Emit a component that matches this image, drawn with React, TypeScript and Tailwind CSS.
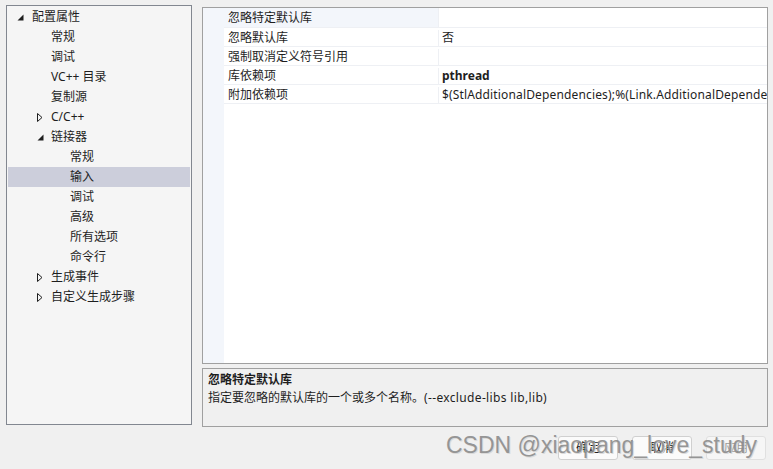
const font = "font-['Microsoft_YaHei_UI','Noto_Sans','Noto_Sans_CJK_SC',sans-serif]";

type TreeItem = { label: string; level: number; arrow?: "open" | "closed"; selected?: boolean };

const tree: TreeItem[] = [
  { label: "配置属性", level: 0, arrow: "open" },
  { label: "常规", level: 1 },
  { label: "调试", level: 1 },
  { label: "VC++ 目录", level: 1 },
  { label: "复制源", level: 1 },
  { label: "C/C++", level: 1, arrow: "closed" },
  { label: "链接器", level: 1, arrow: "open" },
  { label: "常规", level: 2 },
  { label: "输入", level: 2, selected: true },
  { label: "调试", level: 2 },
  { label: "高级", level: 2 },
  { label: "所有选项", level: 2 },
  { label: "命令行", level: 2 },
  { label: "生成事件", level: 1, arrow: "closed" },
  { label: "自定义生成步骤", level: 1, arrow: "closed" },
];

const rows = [
  { name: "忽略特定默认库", value: "", active: true },
  { name: "忽略默认库", value: "否" },
  { name: "强制取消定义符号引用", value: "" },
  { name: "库依赖项", value: "pthread", bold: true },
  { name: "附加依赖项", value: "$(StlAdditionalDependencies);%(Link.AdditionalDependencies)", wide: true },
];

function Arrow({ kind }: { kind: "open" | "closed" }) {
  if (kind === "open") {
    return (
      <svg width="7" height="7" viewBox="0 0 7 7">
        <path d="M6.5 0.5 L6.5 6.5 L0.5 6.5 Z" fill="#1e1e1e" />
      </svg>
    );
  }
  return (
    <svg width="6" height="9" viewBox="0 0 6 9">
      <path d="M0.5 0.5 L5 4.5 L0.5 8.5 Z" fill="none" stroke="#1e1e1e" strokeWidth="1" />
    </svg>
  );
}

function TreeRow({ item }: { item: TreeItem }) {
  const textLeft = item.level === 0 ? "pl-[24px]" : item.level === 1 ? "pl-[43px]" : "pl-[62px]";
  const arrowLeft = item.level === 0 ? "left-[9px]" : "left-[29px]";
  return (
    <div className={`relative flex h-5 items-center ${textLeft} ${item.selected ? "bg-[#cccedb]" : ""}`}>
      {item.arrow && (
        <span className={`absolute ${arrowLeft} top-0 flex h-5 items-center`}>
          <Arrow kind={item.arrow} />
        </span>
      )}
      <span className="leading-none">{item.label}</span>
    </div>
  );
}

export default function App() {
  return (
    <div className={`relative h-[469px] w-[773px] overflow-hidden bg-[#f0f0f0] text-[12px] text-[#1e1e1e] ${font}`}>
      <div className="flex pl-[6px] pt-[5px]">
        <div className="h-[420px] w-[186px] border border-[#828790] bg-[#f5f5f5] px-px pt-px">
          {tree.map((t, i) => (
            <TreeRow key={i} item={t} />
          ))}
        </div>

        <div className="ml-[10px] flex w-[566px] flex-col pt-[2px]">
          <div className="flex h-[357px] border border-[#a0a0a0] bg-white">
            <div className="w-[21px] bg-[#f3f6fb]" />
            <div className="flex flex-1 flex-col overflow-hidden">
              {rows.map((r, i) => (
                <div key={i} className={`flex border-b border-[#eef0f4] ${i === 0 ? "h-[20px]" : "h-[19px] pt-[2px]"}`}>
                  <div className={`flex w-[214px] items-center pl-[4px] ${r.active ? "bg-[#f3f6fb]" : ""}`}>
                    {r.name}
                  </div>
                  <div
                    className={`flex min-w-0 flex-1 items-center overflow-hidden whitespace-nowrap border-l border-[#eef0f4] pl-[3px] ${r.bold ? "font-bold" : ""} ${r.wide ? "tracking-[0.15px]" : ""}`}
                  >
                    {r.value}
                  </div>
                </div>
              ))}
            </div>
          </div>
          <div className="mt-[4px] h-[59px] border border-[#a0a0a0] bg-[#f0f0f0] px-[5px] pt-[2px]">
            <div className="font-bold leading-[18px]">忽略特定默认库</div>
            <div className="leading-[18px]">
              指定要忽略的默认库的一个或多个名称。<span className="tracking-[0.35px]">(--exclude-libs lib,lib)</span>
            </div>
          </div>
        </div>
      </div>

      <div className="flex justify-end gap-[14px] pr-[7px] pt-[9px]">
        <button className="h-[24px] w-[60px] rounded-[3px] border border-[#d0d0d0] bg-[#fbfbfb] text-[12px]">确定</button>
        <button className="h-[24px] w-[60px] rounded-[3px] border border-[#d0d0d0] bg-[#fbfbfb] text-[12px]">取消</button>
        <button className="h-[24px] w-[60px] rounded-[3px] border border-[#e0e0e0] bg-[#f6f6f6] text-[12px] text-[#9a9a9a]">应用</button>
      </div>

      <div className="pointer-events-none absolute left-[446px] top-[432px] font-['Liberation_Sans',sans-serif] text-[23px] leading-[27px] text-[#8c8c8c] opacity-90 [text-shadow:1px_1px_0_#d8d8d8]">
        CSDN @xiaopang_love_study
      </div>
    </div>
  );
}
